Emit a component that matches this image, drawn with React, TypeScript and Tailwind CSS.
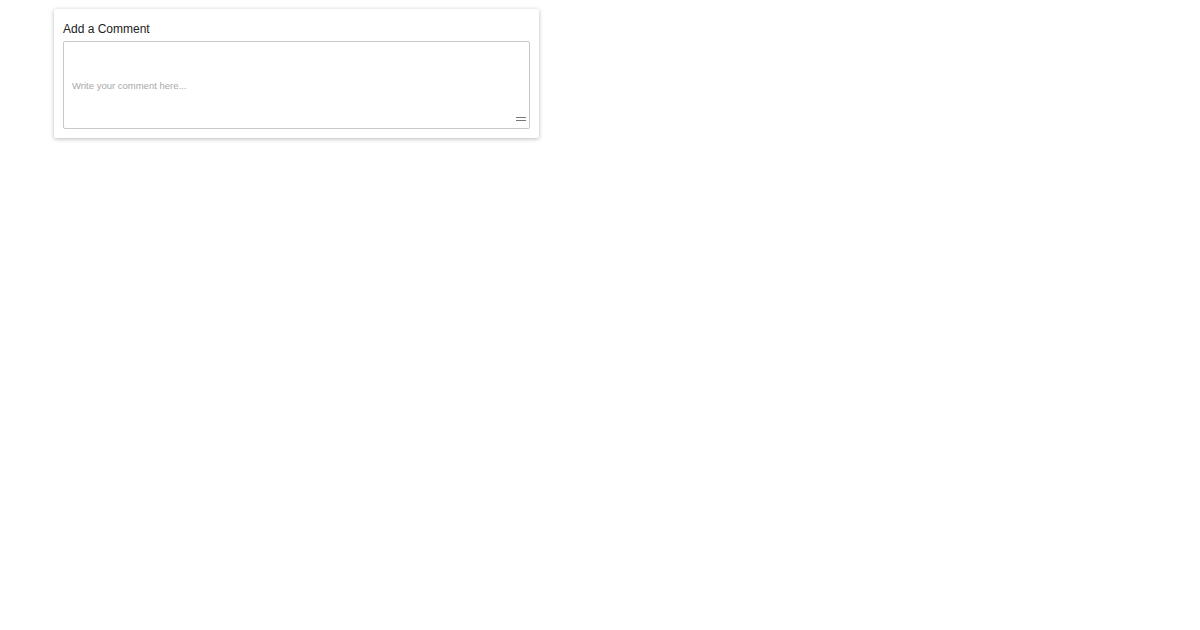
import React from "react";

export default function App() {
  return (
    <div className="w-[1200px] h-[630px] bg-white" style={{ fontFamily: '"Liberation Sans", Arial, sans-serif' }}>
      <div className="ml-[54px] pt-[9px]">
        <div className="w-[485px] bg-white px-[9px] pt-[12px] pb-[9px] rounded-[2px] shadow-[0_1px_4px_rgba(0,0,0,0.28)]">
          <div className="text-[12px] leading-[16px] text-[#222]">Add a Comment</div>
          <div className="relative mt-[4px] h-[88px] border border-[#c8c8c8] rounded-[2px] flex items-center pl-[8px] pt-[3px]">
            <span className="text-[9.5px] text-[#a8a8a8]">Write your comment here...</span>
            <div className="absolute right-[3px] bottom-[7px] w-[10px] flex flex-col gap-[2px]">
              <div className="h-[1px] bg-[#777]" />
              <div className="h-[1px] bg-[#777]" />
            </div>
          </div>
        </div>
      </div>
    </div>
  );
}
